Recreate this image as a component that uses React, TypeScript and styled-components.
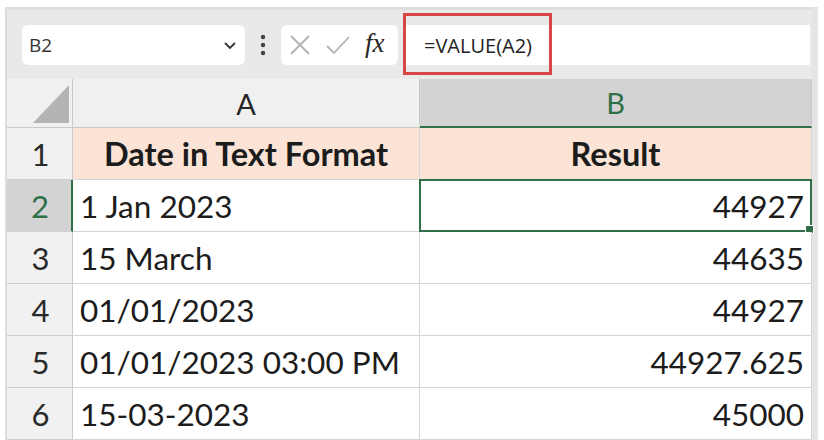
import React from "react";
import styled, { createGlobalStyle } from "styled-components";

const GlobalStyle = createGlobalStyle`
  html, body {
    margin: 0;
    padding: 0;
    background: #ffffff;
  }
  body {
    font-family: "Lato", "Liberation Sans", sans-serif;
  }
`;

const GREEN = "#2f7048";
const GRID = "#d6d6d6";

const Frame = styled.div`
  margin: 7px 0 0 5px;
  width: 813px;
  border-left: 2px solid #dcdcdc;
  border-right: 6px solid #e4e4e4;
  box-sizing: border-box;
  background: #ffffff;
`;

const Toolbar = styled.div`
  position: relative;
  height: 72px;
  background: #e9e9e9;
  border-top: 3px solid #dedede;
  box-sizing: border-box;
  display: flex;
  align-items: flex-start;
  padding: 15px 0 0 15px;
`;

const NameBox = styled.div`
  width: 223px;
  height: 40px;
  background: #ffffff;
  border-radius: 6px;
  display: flex;
  align-items: center;
  justify-content: space-between;
  padding: 0 8px 0 7px;
  box-sizing: border-box;
  font-family: "Open Sans", "Liberation Sans", sans-serif;
  font-size: 19px;
  color: #333;
`;

const Dots = styled.div`
  width: 36px;
  height: 40px;
  display: flex;
  align-items: center;
  justify-content: center;
`;

const IconBox = styled.div`
  width: 117px;
  height: 40px;
  background: #ffffff;
  border-radius: 6px;
  display: flex;
  align-items: center;
  gap: 14px;
  padding-left: 8px;
  box-sizing: border-box;
`;

const Fx = styled.span`
  font-family: "Liberation Serif", "DejaVu Serif", serif;
  font-style: italic;
  font-size: 27px;
  color: #262626;
  margin-left: 0;
  margin-top: -4px;
`;

const FormulaBar = styled.div`
  flex: 1;
  height: 40px;
  margin-left: 5px;
  margin-right: 2px;
  background: #ffffff;
  display: flex;
  align-items: center;
  padding-left: 21px;
  font-family: "Open Sans", "Liberation Sans", sans-serif;
  font-size: 20px;
  color: #222;
`;

const Highlight = styled.div`
  position: absolute;
  left: 396px;
  top: 3px;
  width: 149px;
  height: 62px;
  border: 3px solid #d94646;
  box-sizing: border-box;
  pointer-events: none;
`;

const Sheet = styled.div`
  display: grid;
  grid-template-columns: 66px 347px 392px;
  grid-template-rows: 49px repeat(6, 52px);
`;

const Corner = styled.div`
  background: #f1f1f1;
  border-right: 1px solid #c9c9c9;
  border-bottom: 1px solid #c9c9c9;
  display: flex;
  align-items: flex-end;
  justify-content: flex-end;
  padding: 0 3px 4px 0;
`;

const ColHead = styled.div<{ $active?: boolean }>`
  background: ${(p) => (p.$active ? "#d3d3d3" : "#f0f0f0")};
  color: ${(p) => (p.$active ? GREEN : "#262626")};
  border-right: 1px solid #c9c9c9;
  border-bottom: ${(p) => (p.$active ? `2px solid ${GREEN}` : "1px solid #c9c9c9")};
  display: flex;
  align-items: center;
  justify-content: center;
  font-size: 29px;
`;

const RowHead = styled.div<{ $active?: boolean }>`
  background: ${(p) => (p.$active ? "#d3d3d3" : "#f1f1f1")};
  color: ${(p) => (p.$active ? GREEN : "#2a2a2a")};
  border-right: ${(p) => (p.$active ? `2px solid ${GREEN}` : "1px solid #c9c9c9")};
  border-bottom: 1px solid #cfcfcf;
  display: flex;
  align-items: center;
  justify-content: center;
  font-size: 31px;
  padding-left: 2px;
`;

const Cell = styled.div<{ $right?: boolean; $head?: boolean }>`
  position: relative;
  background: ${(p) => (p.$head ? "#fbe4d6" : "#ffffff")};
  border-right: 1px solid ${GRID};
  border-bottom: 1px solid ${GRID};
  display: flex;
  align-items: center;
  justify-content: ${(p) => (p.$head ? "center" : p.$right ? "flex-end" : "flex-start")};
  padding: 0 7px;
  font-size: ${(p) => (p.$head ? "32.5px" : "31.5px")};
  font-weight: ${(p) => (p.$head ? 700 : 400)};
  color: #1c1c1c;
  white-space: nowrap;
  box-sizing: border-box;
`;

const SelectionBox = styled.div`
  position: absolute;
  inset: -1px -1px -1px -1px;
  border: 2px solid ${GREEN};
  pointer-events: none;
`;

const FillHandle = styled.div`
  position: absolute;
  right: -4px;
  bottom: -4px;
  width: 7px;
  height: 7px;
  background: ${GREEN};
  border: 1px solid #ffffff;
`;

const rows: [string, string][] = [
  ["1 Jan 2023", "44927"],
  ["15 March", "44635"],
  ["01/01/2023", "44927"],
  ["01/01/2023 03:00 PM", "44927.625"],
  ["15-03-2023", "45000"],
];

export default function App() {
  return (
    <>
      <GlobalStyle />
      <Frame>
        <Toolbar>
          <NameBox>
            <span>B2</span>
            <svg width="14" height="10" viewBox="0 0 14 10">
              <path d="M2 3 L7 8 L12 3" fill="none" stroke="#333" strokeWidth="1.8" />
            </svg>
          </NameBox>
          <Dots>
            <svg width="6" height="22" viewBox="0 0 6 22">
              <circle cx="3" cy="3" r="2.2" fill="#444" />
              <circle cx="3" cy="11" r="2.2" fill="#444" />
              <circle cx="3" cy="19" r="2.2" fill="#444" />
            </svg>
          </Dots>
          <IconBox>
            <svg width="22" height="22" viewBox="0 0 22 22">
              <path d="M2 2 L20 20 M20 2 L2 20" stroke="#b3b3b3" strokeWidth="1.8" fill="none" />
            </svg>
            <svg width="26" height="22" viewBox="0 0 26 22">
              <path d="M2 12 L9 19 L24 3" stroke="#b3b3b3" strokeWidth="1.8" fill="none" />
            </svg>
            <Fx>fx</Fx>
          </IconBox>
          <FormulaBar>=VALUE(A2)</FormulaBar>
          <Highlight />
        </Toolbar>
        <Sheet>
          <Corner>
            <svg width="36" height="38" viewBox="0 0 36 38">
              <polygon points="36,0 36,38 0,38" fill="#b4b4b4" />
            </svg>
          </Corner>
          <ColHead>A</ColHead>
          <ColHead $active>B</ColHead>

          <RowHead>1</RowHead>
          <Cell $head>Date in Text Format</Cell>
          <Cell $head>Result</Cell>

          {rows.map(([a, b], i) => (
            <React.Fragment key={i}>
              <RowHead $active={i === 0}>{i + 2}</RowHead>
              <Cell>{a}</Cell>
              <Cell $right>
                {b}
                {i === 0 && (
                  <SelectionBox>
                    <FillHandle />
                  </SelectionBox>
                )}
              </Cell>
            </React.Fragment>
          ))}
        </Sheet>
      </Frame>
    </>
  );
}
